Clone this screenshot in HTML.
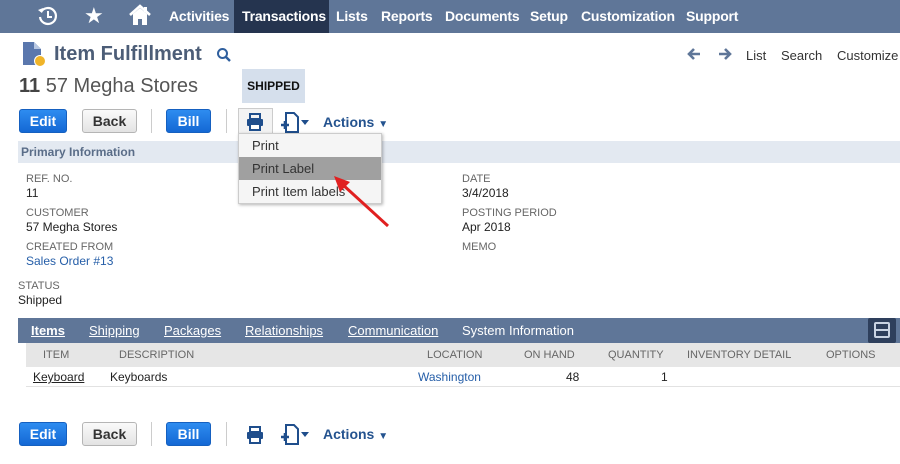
<!DOCTYPE html>
<html><head><meta charset="utf-8"><style>
*{margin:0;padding:0;box-sizing:border-box}
body{width:900px;height:464px;overflow:hidden;background:#fff;font-family:"Liberation Sans",Arial,sans-serif;position:relative;color:#222}
.a{position:absolute;white-space:nowrap}
.nav{left:0;top:0;width:900px;height:33px;background:#5f7698}
.nv{top:8px;color:#fff;font-weight:bold;font-size:14px;letter-spacing:-0.2px}
.btn{height:24px;border-radius:3px;font-weight:bold;font-size:14px;text-align:center;line-height:22px}
.blue{background:linear-gradient(#2e8cf0,#1468d4);color:#fff;border:1px solid #1560c0}
.grey{background:linear-gradient(#fafafa,#e3e3e3);color:#333;border:1px solid #b5b5b5}
.sep{width:1px;height:24px;background:#ccc}
.lbl{font-size:11px;color:#666}
.val{font-size:12px;color:#222}
.tab{top:323px;color:#fff;font-size:13px;text-decoration:underline}
.th{top:349px;font-size:11px;color:#666}
</style></head><body>
<div class="a nav"></div>
<div class="a" style="left:234px;top:0;width:95px;height:33px;background:#25344f"></div>
<svg class="a" style="left:37px;top:5px" width="22" height="22" viewBox="0 0 22 22"><path d="M4 7 A8 8 0 1 1 3 12" fill="none" stroke="#fff" stroke-width="2.2"/><path d="M1 5 L5 8 L6 3Z" fill="#fff"/><path d="M11 6 V12 H15" fill="none" stroke="#fff" stroke-width="2"/></svg>
<div class="a" style="left:84px;top:3px;color:#fff;font-size:22px">★</div>
<svg class="a" style="left:128px;top:4px" width="24" height="22" viewBox="0 0 24 22"><path d="M2 11 L12 2 L22 11" fill="none" stroke="#fff" stroke-width="2.6"/><path d="M5 10 V21 H10 V15 H14 V21 H19 V10 L12 4Z" fill="#fff"/><rect x="16" y="3" width="3" height="5" fill="#fff"/></svg>
<div class="a nv" style="left:169px">Activities</div>
<div class="a nv" style="left:242px">Transactions</div>
<div class="a nv" style="left:336px">Lists</div>
<div class="a nv" style="left:381px">Reports</div>
<div class="a nv" style="left:445px">Documents</div>
<div class="a nv" style="left:530px">Setup</div>
<div class="a nv" style="left:581px">Customization</div>
<div class="a nv" style="left:686px">Support</div>

<svg class="a" style="left:22px;top:41px" width="26" height="26" viewBox="0 0 26 26"><path d="M1 1 H12 L19 8 V24 H1Z" fill="#5a77ad"/><path d="M12 1 V8 H19Z" fill="#b7c7e2"/><circle cx="18" cy="20" r="5.5" fill="#f0b429" stroke="#fff" stroke-width="1"/></svg>
<div class="a" style="left:54px;top:43px;font-size:20px;font-weight:bold;color:#4c5d77">Item Fulfillment</div>
<svg class="a" style="left:216px;top:47px" width="16" height="16" viewBox="0 0 16 16"><circle cx="6.5" cy="6.5" r="4.5" fill="none" stroke="#2f5f9e" stroke-width="2"/><path d="M10 10 L14 14" stroke="#2f5f9e" stroke-width="2.4"/></svg>
<svg class="a" style="left:687px;top:48px" width="14" height="12" viewBox="0 0 14 12"><path d="M13 6 H3 M7 1 L2 6 L7 11" fill="none" stroke="#5f7698" stroke-width="2.6"/></svg>
<svg class="a" style="left:718px;top:48px" width="14" height="12" viewBox="0 0 14 12"><path d="M1 6 H11 M7 1 L12 6 L7 11" fill="none" stroke="#5f7698" stroke-width="2.6"/></svg>
<div class="a" style="left:746px;top:48px;font-size:13px;color:#333">List</div>
<div class="a" style="left:781px;top:48px;font-size:13px;color:#333">Search</div>
<div class="a" style="left:837px;top:48px;font-size:13px;color:#333">Customize</div>

<div class="a" style="left:19px;top:75px;font-size:20px;color:#555"><b style="color:#444">11</b> 57 Megha Stores</div>
<div class="a" style="left:242px;top:69px;width:63px;height:34px;background:#d5dfec;font-size:12px;font-weight:bold;text-align:center;line-height:34px;color:#111">SHIPPED</div>

<div class="a btn blue" style="left:19px;top:109px;width:48px">Edit</div>
<div class="a btn grey" style="left:82px;top:109px;width:55px">Back</div>
<div class="a sep" style="left:151px;top:109px"></div>
<div class="a btn blue" style="left:166px;top:109px;width:45px">Bill</div>
<div class="a sep" style="left:226px;top:109px"></div>
<div class="a" style="left:238px;top:108px;width:35px;height:27px;border:1px solid #ccc;border-bottom:none;background:#f3f3f3"></div>
<svg class="a" style="left:246px;top:113px" width="18" height="18" viewBox="0 0 18 18"><rect x="4" y="1" width="10" height="5" fill="none" stroke="#1f4e8c" stroke-width="2"/><rect x="1" y="6" width="16" height="7" rx="1" fill="#1f4e8c"/><rect x="4" y="11" width="10" height="6" fill="#fff" stroke="#1f4e8c" stroke-width="2"/></svg>
<svg class="a" style="left:280px;top:112px" width="32" height="22" viewBox="0 0 32 22"><path d="M6 1 H14 L18 5 V20 H6Z" fill="none" stroke="#1f4e8c" stroke-width="2"/><path d="M1 13 H9 M5 9 V17" stroke="#1f4e8c" stroke-width="2.6"/><path d="M21 8 H29 L25 13Z" fill="#1f4e8c"/></svg>
<div class="a" style="left:323px;top:114px;font-size:14px;font-weight:bold;color:#24538f">Actions <span style="font-size:10px">▼</span></div>

<div class="a" style="left:18px;top:141px;width:882px;height:22px;background:#e3e9f1;font-size:12px;font-weight:bold;color:#5a6d88;padding:4px 0 0 3px">Primary Information</div>

<div class="a" style="left:238px;top:133px;width:144px;height:71px;background:#f5f5f5;border:1px solid #ccc;box-shadow:1px 1px 3px rgba(0,0,0,.3)"></div>
<div class="a" style="left:239px;top:157px;width:142px;height:23px;background:#a0a0a0"></div>
<div class="a" style="left:252px;top:138px;font-size:13px;color:#333">Print</div>
<div class="a" style="left:252px;top:161px;font-size:13px;color:#333">Print Label</div>
<div class="a" style="left:252px;top:184px;font-size:13px;color:#333">Print Item labels</div>
<svg class="a" style="left:328px;top:170px" width="66" height="60" viewBox="0 0 66 60"><path d="M60 56 L14 14" stroke="#e02020" stroke-width="3"/><path d="M6 6 L22 12 L12 22Z" fill="#e02020"/></svg>

<div class="a lbl" style="left:26px;top:173px">REF. NO.</div><div class="a val" style="left:26px;top:186px">11</div>
<div class="a lbl" style="left:26px;top:207px">CUSTOMER</div><div class="a val" style="left:26px;top:220px">57 Megha Stores</div>
<div class="a lbl" style="left:26px;top:241px">CREATED FROM</div><div class="a val" style="left:26px;top:254px;color:#255ea8">Sales Order #13</div>
<div class="a lbl" style="left:462px;top:173px">DATE</div><div class="a val" style="left:462px;top:186px">3/4/2018</div>
<div class="a lbl" style="left:462px;top:207px">POSTING PERIOD</div><div class="a val" style="left:462px;top:220px">Apr 2018</div>
<div class="a lbl" style="left:462px;top:241px">MEMO</div>
<div class="a lbl" style="left:18px;top:280px">STATUS</div><div class="a val" style="left:18px;top:293px">Shipped</div>

<div class="a" style="left:18px;top:318px;width:882px;height:25px;background:#5f7698"></div>
<div class="a tab" style="left:31px;font-weight:bold">Items</div>
<div class="a" style="left:41px;top:338px;width:0;height:0;border:5px solid transparent;border-bottom-color:#fff"></div>
<div class="a tab" style="left:89px">Shipping</div>
<div class="a tab" style="left:164px">Packages</div>
<div class="a tab" style="left:245px">Relationships</div>
<div class="a tab" style="left:348px">Communication</div>
<div class="a tab" style="left:462px;text-decoration:none">System Information</div>
<div class="a" style="left:868px;top:318px;width:28px;height:25px;background:#2e3f5c;border-radius:2px"></div>
<div class="a" style="left:874px;top:322px;width:16px;height:16px;border:2px solid #c9d3e3;border-radius:2px"></div>
<div class="a" style="left:874px;top:329px;width:16px;height:2px;background:#c9d3e3"></div>

<div class="a" style="left:26px;top:343px;width:874px;height:24px;background:#e6e6e6"></div>
<div class="a" style="left:26px;top:367px;width:874px;height:20px;border-bottom:1px solid #e2e2e2"></div>
<div class="a th" style="left:43px">ITEM</div>
<div class="a th" style="left:119px">DESCRIPTION</div>
<div class="a th" style="left:427px">LOCATION</div>
<div class="a th" style="left:524px">ON HAND</div>
<div class="a th" style="left:608px">QUANTITY</div>
<div class="a th" style="left:687px">INVENTORY DETAIL</div>
<div class="a th" style="left:826px">OPTIONS</div>
<div class="a val" style="left:33px;top:370px;text-decoration:underline">Keyboard</div>
<div class="a val" style="left:110px;top:370px">Keyboards</div>
<div class="a val" style="left:418px;top:370px;color:#255ea8">Washington</div>
<div class="a val" style="left:566px;top:370px">48</div>
<div class="a val" style="left:661px;top:370px">1</div>

<div class="a btn blue" style="left:19px;top:422px;width:48px">Edit</div>
<div class="a btn grey" style="left:82px;top:422px;width:55px">Back</div>
<div class="a sep" style="left:151px;top:422px"></div>
<div class="a btn blue" style="left:166px;top:422px;width:45px">Bill</div>
<div class="a sep" style="left:226px;top:422px"></div>
<svg class="a" style="left:246px;top:426px" width="18" height="18" viewBox="0 0 18 18"><rect x="4" y="1" width="10" height="5" fill="none" stroke="#1f4e8c" stroke-width="2"/><rect x="1" y="6" width="16" height="7" rx="1" fill="#1f4e8c"/><rect x="4" y="11" width="10" height="6" fill="#fff" stroke="#1f4e8c" stroke-width="2"/></svg>
<svg class="a" style="left:280px;top:424px" width="32" height="22" viewBox="0 0 32 22"><path d="M6 1 H14 L18 5 V20 H6Z" fill="none" stroke="#1f4e8c" stroke-width="2"/><path d="M1 13 H9 M5 9 V17" stroke="#1f4e8c" stroke-width="2.6"/><path d="M21 8 H29 L25 13Z" fill="#1f4e8c"/></svg>
<div class="a" style="left:323px;top:426px;font-size:14px;font-weight:bold;color:#24538f">Actions <span style="font-size:10px">▼</span></div>
</body></html>
